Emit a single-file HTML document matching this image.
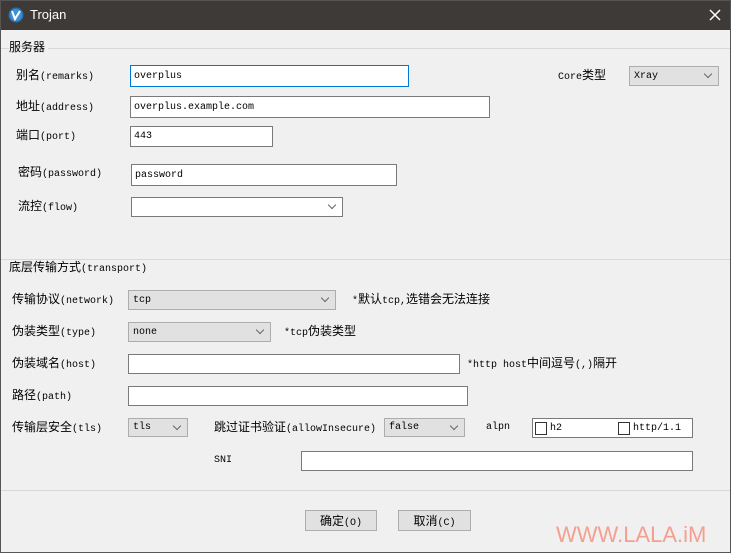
<!DOCTYPE html>
<html><head><meta charset="utf-8"><style>
*{box-sizing:border-box;margin:0;padding:0}
body{width:731px;height:553px;background:#f0f0f0;position:relative;overflow:hidden;font-family:"Noto Sans CJK SC",sans-serif;font-size:12px;color:#000}
.frame{position:absolute;left:0;top:0;width:731px;height:553px;border:1px solid #555;pointer-events:none}
.w{position:absolute;left:1px;top:0;width:731px;height:553px}
.a{position:absolute;white-space:nowrap;line-height:14px}
.m{font-family:"Liberation Mono",monospace;font-size:10px;vertical-align:0px}
.in{position:absolute;background:#fff;border:1px solid #7a7a7a;font-family:"Liberation Mono",monospace;font-size:10px;padding:0 3px;display:flex;align-items:center}
.sel{position:absolute;background:#e1e1e1;border:1px solid #adadad;font-family:"Liberation Mono",monospace;font-size:10px;padding:0 4px;display:flex;align-items:center}
.sel:after{content:"";position:absolute;right:7px;top:50%;margin-top:-5px;width:5px;height:5px;border-right:1px solid #666;border-bottom:1px solid #666;transform:rotate(45deg)}
.hr{position:absolute;left:0;right:0;height:1px;background:#d8d8d8}
.btn{position:absolute;background:#e1e1e1;border:1px solid #adadad;text-align:center;line-height:19px}
.cb{display:inline-block;width:12px;height:13px;border:1px solid #333;background:#fff;margin-right:3px}
</style></head><body>
<div style="position:absolute;left:0;top:0;width:731px;height:30px;background:#3e3a38"></div>
<svg style="position:absolute;left:8px;top:7px" width="16" height="16" viewBox="0 0 16 16"><circle cx="8" cy="8" r="7.5" fill="#2a6fb0"/><circle cx="8" cy="8" r="6" fill="#3d8fd6"/><path d="M4 4 L7 12 L12 4" stroke="#fff" stroke-width="2" fill="none"/></svg>
<div class="a" style="left:30px;top:8px;color:#fff;font-family:'Liberation Sans',sans-serif;font-size:13px">Trojan</div>
<svg style="position:absolute;left:709px;top:9px" width="12" height="12" viewBox="0 0 12 12"><path d="M1 1L11 11M11 1L1 11" stroke="#fff" stroke-width="1.5"/></svg>
<div class="hr" style="top:48px"></div>
<div class="hr" style="top:259px"></div>
<div class="hr" style="top:490px"></div>
<div class="w">
<div class="a" style="left:8px;top:40px;background:#f0f0f0;padding-right:3px">服务器</div>
<div class="a" style="left:15px;top:68px">别名<span class="m">(remarks)</span></div>
<div class="in" style="left:129px;top:65px;width:279px;height:22px;border-color:#0078d7">overplus</div>
<div class="a" style="left:557px;top:68px"><span class="m">Core</span>类型</div>
<div class="sel" style="left:628px;top:66px;width:90px;height:20px">Xray</div>
<div class="a" style="left:15px;top:99px">地址<span class="m">(address)</span></div>
<div class="in" style="left:129px;top:96px;width:360px;height:22px">overplus.example.com</div>
<div class="a" style="left:15px;top:128px">端口<span class="m">(port)</span></div>
<div class="in" style="left:129px;top:126px;width:143px;height:21px">443</div>
<div class="a" style="left:17px;top:165px">密码<span class="m">(password)</span></div>
<div class="in" style="left:130px;top:164px;width:266px;height:22px">password</div>
<div class="a" style="left:17px;top:199px">流控<span class="m">(flow)</span></div>
<div class="sel" style="left:130px;top:197px;width:212px;height:20px;background:#fff;border-color:#7a7a7a"></div>
<div class="a" style="left:8px;top:260px">底层传输方式<span class="m">(transport)</span></div>
<div class="a" style="left:11px;top:292px">传输协议<span class="m">(network)</span></div>
<div class="sel" style="left:127px;top:290px;width:208px;height:20px">tcp</div>
<div class="a" style="left:351px;top:292px"><span class="m">*</span>默认<span class="m">tcp,</span>选错会无法连接</div>
<div class="a" style="left:11px;top:324px">伪装类型<span class="m">(type)</span></div>
<div class="sel" style="left:127px;top:322px;width:143px;height:20px">none</div>
<div class="a" style="left:283px;top:324px"><span class="m">*tcp</span>伪装类型</div>
<div class="a" style="left:11px;top:356px">伪装域名<span class="m">(host)</span></div>
<div class="in" style="left:127px;top:354px;width:332px;height:20px"></div>
<div class="a" style="left:466px;top:356px"><span class="m">*http host</span>中间逗号<span class="m">(,)</span>隔开</div>
<div class="a" style="left:11px;top:388px">路径<span class="m">(path)</span></div>
<div class="in" style="left:127px;top:386px;width:340px;height:20px"></div>
<div class="a" style="left:11px;top:420px">传输层安全<span class="m">(tls)</span></div>
<div class="sel" style="left:127px;top:418px;width:60px;height:19px">tls</div>
<div class="a" style="left:213px;top:420px">跳过证书验证<span class="m">(allowInsecure)</span></div>
<div class="sel" style="left:383px;top:418px;width:81px;height:19px">false</div>
<div class="a m" style="left:485px;top:421px">alpn</div>
<div class="in" style="left:531px;top:418px;width:161px;height:20px;padding:0 2px"><span class="cb"></span>h2<span style="display:inline-block;width:56px"></span><span class="cb"></span>http/1.1</div>
<div class="a m" style="left:213px;top:454px">SNI</div>
<div class="in" style="left:300px;top:451px;width:392px;height:20px"></div>
<div class="btn" style="left:304px;top:510px;width:72px;height:21px">确定<span class="m">(O)</span></div>
<div class="btn" style="left:397px;top:510px;width:73px;height:21px">取消<span class="m">(C)</span></div>
</div>
<div class="a" style="left:556px;top:523px;color:#f4a090;font-family:'Liberation Sans',sans-serif;font-size:22px;line-height:24px">WWW.LALA.iM</div>
<div class="frame"></div>
</body></html>
